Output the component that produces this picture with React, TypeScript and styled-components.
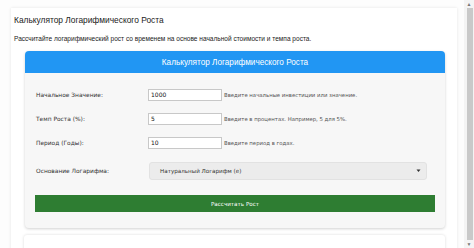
import styled, { createGlobalStyle } from "styled-components";

const GlobalStyle = createGlobalStyle`
  html, body {
    margin: 0;
    padding: 0;
    background: #ffffff;
  }
  body {
    font-family: "Liberation Sans", Arial, sans-serif;
    color: #222;
  }
`;

const Screen = styled.div`
  display: flex;
  height: 248px;
  overflow: hidden;
`;

const Page = styled.div`
  flex: 1;
  padding: 8px 7px 0 11px;
  background: #fdfdfd;
`;

const Container = styled.div`
  background: #fff;
  box-shadow: 0 0 3px rgba(0, 0, 0, 0.1);
  padding: 6px 12px 0 3px;
  height: 260px;
`;

const Title = styled.h1`
  margin: 0;
  font-size: 8.4px;
  font-weight: normal;
  line-height: 12px;
  color: #222;
`;

const Intro = styled.p`
  margin: 8px 0 0;
  font-size: 6.55px;
  line-height: 10px;
  color: #222;
`;

const Card = styled.div`
  margin: 7px 0 0 11px;
  background: #f7f7f7;
  border-radius: 4px;
  box-shadow: 0 1px 3px rgba(0, 0, 0, 0.18);
  overflow: hidden;
`;

const CardHeader = styled.div`
  height: 22px;
  background: #2196f3;
  color: #fff;
  font-size: 8.2px;
  display: flex;
  align-items: center;
  justify-content: center;
`;

const CardBody = styled.div`
  padding: 16px 10px 16px 11px;
  display: flex;
  flex-direction: column;
`;

const Row = styled.div<{ $gap: number }>`
  display: flex;
  align-items: center;
  margin-bottom: ${(p) => p.$gap}px;
`;

const Label = styled.label`
  width: 112px;
  font-family: "DejaVu Sans", Verdana, sans-serif;
  font-size: 5.9px;
  color: #333;
`;

const Input = styled.div`
  width: 70px;
  height: 10px;
  border: 1px solid #c8c8c8;
  background: #fff;
  font-family: "DejaVu Sans", Verdana, sans-serif;
  font-size: 6px;
  line-height: 10px;
  padding-left: 2px;
  color: #111;
`;

const Hint = styled.span`
  margin-left: 2px;
  font-family: "DejaVu Sans", Verdana, sans-serif;
  font-size: 5.35px;
  color: #555;
`;

const Select = styled.div`
  width: 278px;
  height: 18px;
  box-sizing: border-box;
  margin-left: 1px;
  background: #ececec;
  border: 1px solid #e2e2e2;
  border-radius: 3px;
  display: flex;
  align-items: center;
  justify-content: space-between;
  padding: 0 5px 0 10px;
  font-family: "DejaVu Sans", Verdana, sans-serif;
  font-size: 5.6px;
  color: #333;
`;

const Caret = styled.svg`
  width: 5px;
  height: 4px;
`;

const Button = styled.div`
  height: 17px;
  margin-left: -1px;
  background: #2e7d32;
  color: #fff;
  font-family: "DejaVu Sans", Verdana, sans-serif;
  font-size: 5.6px;
  display: flex;
  align-items: center;
  justify-content: center;
`;

const NextCard = styled.div`
  margin: 7px 0 0 10px;
  height: 40px;
  background: #fff;
  border-radius: 3px;
  box-shadow: 0 0 3px rgba(0, 0, 0, 0.15);
`;

const Scrollbar = styled.div`
  width: 10px;
  background: #f4f4f4;
  display: flex;
  flex-direction: column;
  align-items: center;
  padding: 1px 0;
  box-sizing: border-box;
`;

const Arrow = styled.div`
  height: 6px;
  font-size: 5px;
  line-height: 6px;
  color: #777;
`;

const Thumb = styled.div`
  flex: 1;
  width: 6px;
  margin: 1px 0 1px 2px;
  background: #c9c9c9;
`;

const fields = [
  { label: "Начальное Значение:", value: "1000", hint: "Введите начальные инвестиции или значение.", gap: 12 },
  { label: "Темп Роста (%):", value: "5", hint: "Введите в процентах. Например, 5 для 5%.", gap: 12 },
  { label: "Период (Годы):", value: "10", hint: "Введите период в годах.", gap: 13 },
];

const App = () => {
  return (
    <>
      <GlobalStyle />
      <Screen>
        <Page>
          <Container>
            <Title>Калькулятор Логарифмического Роста</Title>
            <Intro>
              Рассчитайте логарифмический рост со временем на основе начальной стоимости и темпа роста.
            </Intro>
            <Card>
              <CardHeader>Калькулятор Логарифмического Роста</CardHeader>
              <CardBody>
                {fields.map((f) => (
                  <Row key={f.label} $gap={f.gap}>
                    <Label>{f.label}</Label>
                    <Input>{f.value}</Input>
                    <Hint>{f.hint}</Hint>
                  </Row>
                ))}
                <Row $gap={15}>
                  <Label>Основание Логарифма:</Label>
                  <Select>
                    Натуральный Логарифм (e)
                    <Caret viewBox="0 0 10 8">
                      <path d="M1 1 L5 6 L9 1 Z" fill="#333" />
                    </Caret>
                  </Select>
                </Row>
                <Button>Рассчитать Рост</Button>
              </CardBody>
            </Card>
            <NextCard />
          </Container>
        </Page>
        <Scrollbar>
          <Arrow>▲</Arrow>
          <Thumb />
          <Arrow>▼</Arrow>
        </Scrollbar>
      </Screen>
    </>
  );
};

export default App;
